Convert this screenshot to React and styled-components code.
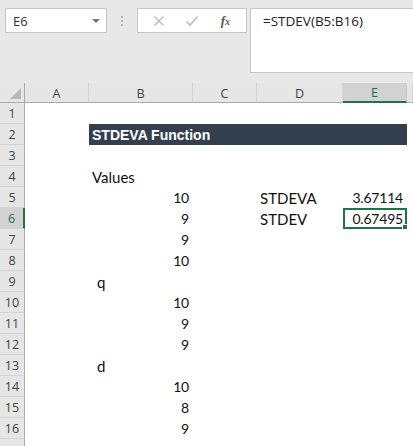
import styled, { createGlobalStyle, css } from "styled-components";

const GlobalStyle = createGlobalStyle`
  html, body {
    margin: 0;
    padding: 0;
    background: #e8e8e8;
    overflow: hidden;
  }
`;

const COLS = "25px 64px 104px 64px 86px 64px 1fr";

const Page = styled.div`
  width: 413px;
  height: 446px;
  overflow: hidden;
  background: #e8e8e8;
  font-family: "Lato", "Liberation Sans", sans-serif;
`;

const Toolbar = styled.div`
  height: 83px;
  display: flex;
  align-items: flex-start;
  padding-top: 8px;
  box-sizing: border-box;
`;

const Box = css`
  background: #fff;
  border: 1px solid #c6c6c6;
  box-sizing: border-box;
  height: 25px;
`;

const NameBox = styled.div`
  ${Box}
  margin-left: 5px;
  width: 102px;
  display: flex;
  align-items: center;
  justify-content: space-between;
  padding: 0 6px 0 7px;
  font-family: "Open Sans", "Noto Sans", sans-serif;
  font-size: 13px;
  color: #333;
`;

const Caret = styled.span`
  width: 0;
  height: 0;
  border-left: 4px solid transparent;
  border-right: 4px solid transparent;
  border-top: 4px solid #777;
`;

const Dots = styled.div`
  width: 30px;
  height: 25px;
  display: flex;
  flex-direction: column;
  align-items: center;
  justify-content: center;
  gap: 2px;

  span {
    width: 2px;
    height: 2px;
    background: #b5b5b5;
  }
`;

const FxBox = styled.div`
  ${Box}
  width: 110px;
  display: flex;
  align-items: center;
  justify-content: space-around;
  padding: 0 4px;
  margin-right: 3px;
`;

const FxButton = styled.span`
  width: 24px;
  display: flex;
  justify-content: center;
`;

const FxText = styled.span`
  font-family: "Liberation Serif", serif;
  font-style: italic;
  font-weight: bold;
  font-size: 13px;
  color: #555;

  small {
    font-size: 10px;
  }
`;

const FormulaBar = styled.div`
  flex: 1;
  height: 65px;
  background: #fff;
  border: 1px solid #c6c6c6;
  border-right: none;
  box-sizing: border-box;
  padding: 3px 0 0 12px;
  font-family: "Open Sans", "Noto Sans", sans-serif;
  font-size: 13.5px;
  color: #222;
`;

const Row = styled.div`
  display: grid;
  grid-template-columns: ${COLS};
  height: ${(p) => p.$h || 21}px;
`;

const Corner = styled.div`
  background: #e6e6e6;
  border-right: 1px solid #ababab;
  border-bottom: 1px solid #ababab;
  position: relative;
  box-sizing: border-box;

  &::after {
    content: "";
    position: absolute;
    right: 3px;
    bottom: 3px;
    border-left: 11px solid transparent;
    border-bottom: 11px solid #b8b8b8;
  }
`;

const ColHead = styled.div`
  background: ${(p) => (p.$active ? "#d2d2d2" : "#e6e6e6")};
  border-right: 1px solid ${(p) => (p.$active ? "#c8c8c8" : "#d4d4d4")};
  border-bottom: ${(p) => (p.$active ? "2px solid #217346" : "1px solid #ababab")};
  box-sizing: border-box;
  display: flex;
  align-items: center;
  justify-content: center;
  font-family: "Open Sans", "Noto Sans", sans-serif;
  font-size: 12.5px;
  color: ${(p) => (p.$active ? "#217346" : "#444")};
  padding-top: 1px;
`;

const RowHead = styled.div`
  background: ${(p) => (p.$active ? "#d2d2d2" : "#e6e6e6")};
  border-right: ${(p) => (p.$active ? "2px solid #217346" : "1px solid #ababab")};
  border-bottom: 1px solid #d4d4d4;
  box-sizing: border-box;
  display: flex;
  align-items: center;
  justify-content: center;
  font-family: "Open Sans", "Noto Sans", sans-serif;
  font-size: 12.5px;
  color: ${(p) => (p.$active ? "#217346" : "#444")};
`;

const Cell = styled.div`
  background: #fff;
  display: flex;
  align-items: center;
  justify-content: ${(p) => (p.$right ? "flex-end" : "flex-start")};
  padding: ${(p) => (p.$right ? "0 4px 0 0" : `0 0 0 ${p.$indent ? 8 : 3}px`)};
  font-size: ${(p) => (p.$right ? 14 : 15)}px;
  letter-spacing: ${(p) => (p.$right ? "-0.2px" : "0")};
  color: #111;
  white-space: nowrap;
  position: relative;
  box-sizing: border-box;
  ${(p) =>
    p.$selected &&
    css`
      border: 2px solid #217346;
      padding-right: 2px;
      &::after {
        content: "";
        position: absolute;
        right: -4px;
        bottom: -4px;
        width: 5px;
        height: 5px;
        background: #217346;
        border: 1px solid #fff;
      }
    `}
`;

const TitleBar = styled.div`
  grid-column: 3 / 7;
  background: #333f4f;
  color: #fff;
  font-family: "Liberation Sans", Arial, sans-serif;
  font-weight: bold;
  font-size: 14px;
  display: flex;
  align-items: center;
  padding-left: 3px;
`;

const cols = ["A", "B", "C", "D", "E", ""];

const rows = [
  {},
  { title: "STDEVA Function" },
  {},
  { b: "Values" },
  { b: 10, d: "STDEVA", e: "3.67114" },
  { b: 9, d: "STDEV", e: "0.67495", active: true },
  { b: 9 },
  { b: 10 },
  { b: "q", indent: true },
  { b: 10 },
  { b: 9 },
  { b: 9 },
  { b: "d", indent: true },
  { b: 10 },
  { b: 8 },
  { b: 9 },
  { hideLabel: true },
];

const isNum = (v) => typeof v === "number";

const X = () => (
  <svg width="12" height="12" viewBox="0 0 12 12">
    <path d="M1.5 1.5 L10.5 10.5 M10.5 1.5 L1.5 10.5" stroke="#bdbdbd" strokeWidth="1.4" fill="none" />
  </svg>
);

const Check = () => (
  <svg width="14" height="12" viewBox="0 0 14 12">
    <path d="M1.5 6.5 L5 10 L12.5 1.5" stroke="#bdbdbd" strokeWidth="1.6" fill="none" />
  </svg>
);

export default function App() {
  return (
    <Page>
      <GlobalStyle />
      <Toolbar>
        <NameBox>
          E6
          <Caret />
        </NameBox>
        <Dots>
          <span />
          <span />
          <span />
        </Dots>
        <FxBox>
          <FxButton>
            <X />
          </FxButton>
          <FxButton>
            <Check />
          </FxButton>
          <FxButton>
            <FxText>
              f<small>x</small>
            </FxText>
          </FxButton>
        </FxBox>
        <FormulaBar>=STDEV(B5:B16)</FormulaBar>
      </Toolbar>

      <Row $h={20}>
        <Corner />
        {cols.map((c, i) => (
          <ColHead key={i} $active={c === "E"}>
            {c}
          </ColHead>
        ))}
      </Row>

      {rows.map((r, i) => (
        <Row key={i}>
          <RowHead $active={r.active}>{r.hideLabel ? "" : i + 1}</RowHead>
          <Cell />
          {r.title ? (
            <TitleBar>{r.title}</TitleBar>
          ) : (
            <>
              <Cell $right={isNum(r.b)} $indent={r.indent}>
                {r.b}
              </Cell>
              <Cell />
              <Cell>{r.d}</Cell>
              <Cell $right $selected={r.active}>
                {r.e}
              </Cell>
            </>
          )}
          <Cell />
        </Row>
      ))}
    </Page>
  );
}
